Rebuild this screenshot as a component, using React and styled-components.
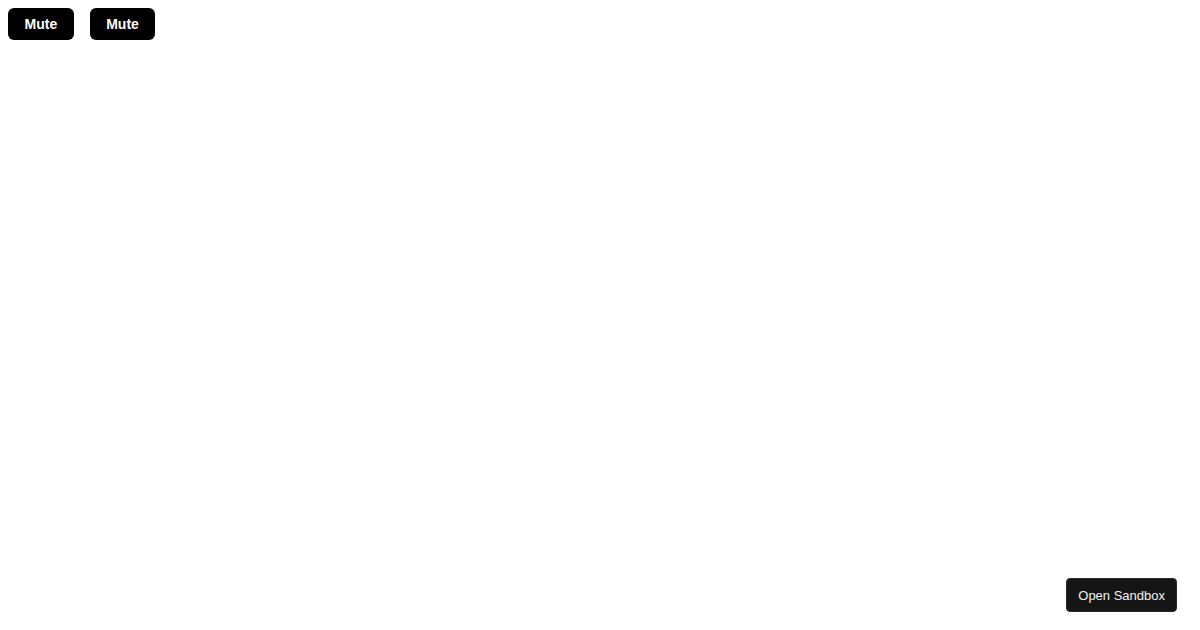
import React from "react";
import styled, { createGlobalStyle } from "styled-components";

const GlobalStyle = createGlobalStyle`
  html, body {
    margin: 0;
    padding: 0;
    background: #ffffff;
    font-family: "Liberation Sans", Arial, sans-serif;
  }
`;

const Page = styled.div`
  width: 1200px;
  height: 630px;
  display: flex;
  flex-direction: column;
  justify-content: space-between;
  box-sizing: border-box;
  padding: 8px 23px 18px 8px;
`;

const Toolbar = styled.div`
  display: flex;
  gap: 16px;
`;

const MuteButton = styled.button`
  height: 32px;
  padding: 0 16.5px;
  background: #000;
  color: #fff;
  border: none;
  border-radius: 6px;
  font-family: "Liberation Sans", Arial, sans-serif;
  font-weight: 700;
  font-size: 14px;
  cursor: pointer;
`;

const Footer = styled.div`
  display: flex;
  justify-content: flex-end;
`;

const SandboxButton = styled.button`
  height: 34px;
  padding: 0 11px;
  background: #151515;
  color: #f2f2f2;
  border: 1px solid #2a2a2a;
  border-radius: 4px;
  font-family: "Liberation Sans", Arial, sans-serif;
  font-size: 13px;
  cursor: pointer;
`;

export default function App() {
  return (
    <>
      <GlobalStyle />
      <Page>
        <Toolbar>
          <MuteButton>Mute</MuteButton>
          <MuteButton>Mute</MuteButton>
        </Toolbar>
        <Footer>
          <SandboxButton>Open Sandbox</SandboxButton>
        </Footer>
      </Page>
    </>
  );
}
